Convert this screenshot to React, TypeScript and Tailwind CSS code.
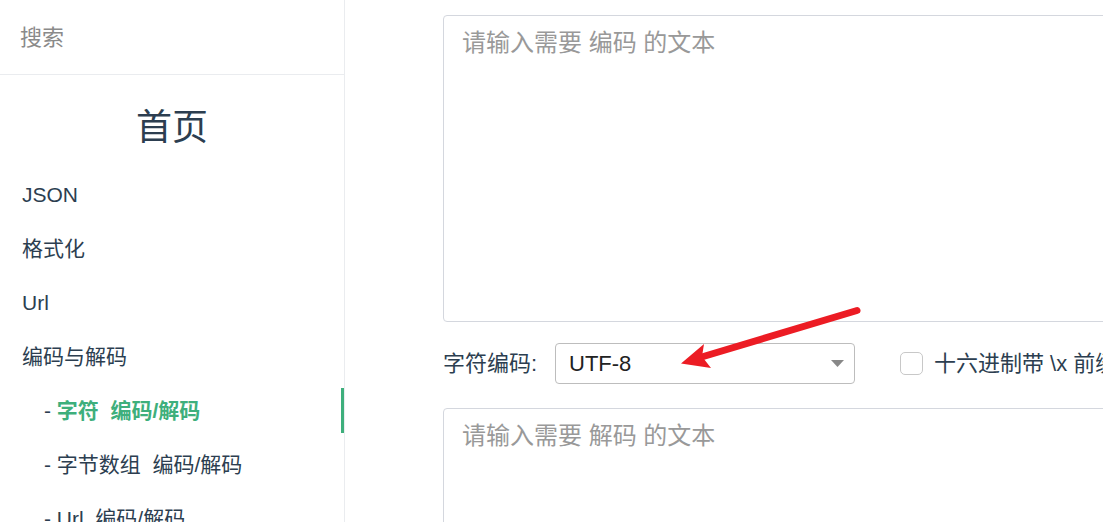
import React from "react";

const items: { label: string; sub?: boolean; active?: boolean }[] = [
  { label: "JSON" },
  { label: "格式化" },
  { label: "Url" },
  { label: "编码与解码" },
  { label: "字符  编码/解码", sub: true, active: true },
  { label: "字节数组  编码/解码", sub: true },
  { label: "Url  编码/解码", sub: true },
];

export default function App() {
  return (
    <div className="relative flex w-[1103px] h-[522px] overflow-hidden bg-white font-['Liberation_Sans','Noto_Sans_CJK_SC',sans-serif] text-[#2c3e50]">
      {/* Sidebar */}
      <aside className="w-[345px] shrink-0 border-r border-[#eaecef] flex flex-col">
        <div className="h-[75px] shrink-0 border-b border-[#eaecef] flex items-center pl-[20px] text-[22px] text-[#8a8a8a]">
          搜索
        </div>
        <div className="pt-[35px] h-[36px] box-content text-center text-[36px] leading-none text-[#2c3e50]">
          首页
        </div>
        <ul className="mt-[26px] flex flex-col gap-[9px]">
          {items.map((it) => (
            <li
              key={it.label}
              className={
                "h-[45px] flex items-center whitespace-pre text-[21px] " +
                (it.sub ? "pl-[44px] " : "pl-[22px] ") +
                (it.active ? "border-r-[3px] border-[#3eaf7c]" : "")
              }
            >
              {it.sub ? (
                <>
                  <span className="text-[#2c3e50]">- </span>
                  <span className={it.active ? "font-bold text-[#3eaf7c]" : ""}>{it.label}</span>
                </>
              ) : (
                it.label
              )}
            </li>
          ))}
        </ul>
      </aside>

      {/* Main */}
      <main className="flex-1 min-w-0 overflow-hidden pl-[98px] pt-[15px]">
        <textarea
          className="block w-[760px] h-[307px] resize-none rounded-[4px] border border-[#d4d7de] px-[18px] pt-[10px] text-[24px] leading-[1.4] outline-none placeholder:text-[#999]"
          placeholder="请输入需要 编码 的文本"
        />
        <div className="mt-[21px] flex items-center h-[41px] w-[760px]">
          <span className="w-[112px] shrink-0 text-[22px] text-[#2c3e50]">字符编码:</span>
          <div className="w-[300px] h-[41px] shrink-0 rounded-[4px] border border-[#bdbdbd] flex items-center pl-[13px] pr-[10px]">
            <span className="flex-1 text-[22px] text-[#222]">UTF-8</span>
            <svg width="13" height="7" viewBox="0 0 13 7">
              <polygon points="0,0 13,0 6.5,7" fill="#888" />
            </svg>
          </div>
          <div className="ml-[45px] w-[23px] h-[23px] shrink-0 rounded-[5px] border border-[#c8c8c8] bg-white" />
          <span className="ml-[11px] whitespace-nowrap text-[22px] text-[#2c3e50]">十六进制带 \x 前缀</span>
        </div>
        <textarea
          className="mt-[24px] block w-[760px] h-[200px] resize-none rounded-[4px] border border-[#d4d7de] px-[18px] pt-[10px] text-[24px] leading-[1.4] outline-none placeholder:text-[#999]"
          placeholder="请输入需要 解码 的文本"
        />
      </main>

      {/* Red annotation arrow */}
      <svg className="absolute left-0 top-0 pointer-events-none" width="1103" height="522" viewBox="0 0 1103 522">
        <line x1="857" y1="310.5" x2="700" y2="357.5" stroke="#ec1c24" strokeWidth="7" strokeLinecap="round" />
        <polygon points="681,363.5 704,344 702,356.5 711,368" fill="#ec1c24" />
      </svg>
    </div>
  );
}
